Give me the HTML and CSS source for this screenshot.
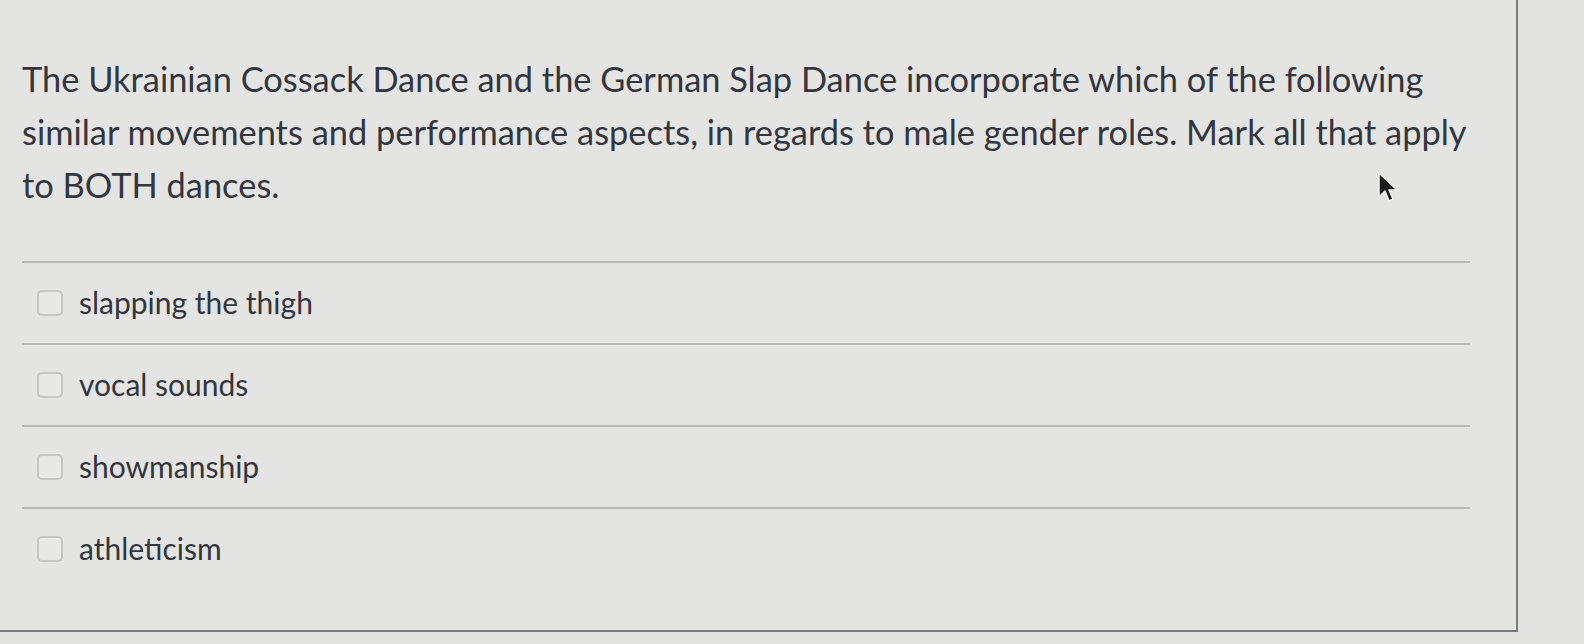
FILE: index.html
```html
<!DOCTYPE html>
<html>
<head>
<meta charset="utf-8">
<link rel="stylesheet" href="styles.css">
</head>
<body>
<div class="page">
  <div class="card">
    <p class="question">The Ukrainian Cossack Dance and the German Slap Dance incorporate which of the following similar movements and performance aspects, in regards to male gender roles. Mark all that apply to BOTH dances.</p>
    <ul class="options">
      <li class="option"><span class="box"></span><span class="label">slapping the thigh</span></li>
      <li class="option"><span class="box"></span><span class="label">vocal sounds</span></li>
      <li class="option"><span class="box"></span><span class="label">showmanship</span></li>
      <li class="option"><span class="box"></span><span class="label">athleticism</span></li>
    </ul>
    <svg class="cursor" width="22" height="34" viewBox="0 0 22 34">
      <path d="M2 2 L2 26 L8 20 L12 30 L16 28 L12 19 L20 19 Z" fill="#1c1c1c" stroke="#f2f2f2" stroke-width="1.5" stroke-linejoin="round"/>
    </svg>
  </div>
</div>
</body>
</html>
```
FILE: styles.css
```css
html, body {
  margin: 0;
  padding: 0;
}
body {
  background: #e2e3e1;
  font-family: Lato, "Open Sans", sans-serif;
  color: #33363f;
}
.page {
  width: 1584px;
  height: 644px;
  overflow: hidden;
}
.card {
  position: relative;
  width: 1516px;
  height: 630px;
  border-right: 2px solid #7a7b7d;
  border-bottom: 2px solid #7a7b7d;
  background: #e4e5e3;
  box-sizing: content-box;
}
.question {
  margin: 0;
  padding: 52px 0 0 22px;
  width: 1462px;
  font-size: 34.4px;
  line-height: 53px;
}
.options {
  list-style: none;
  margin: 50px 0 0 0;
  padding: 0 0 0 22px;
  width: 1448px;
}
.option {
  display: flex;
  align-items: center;
  height: 80px;
  border-top: 2px solid #b9bab9;
}
.box {
  width: 26px;
  height: 26px;
  margin-left: 15px;
  border: 2px solid #c4c5c4;
  border-radius: 5px;
  background: #e8e9e7;
  box-sizing: border-box;
}
.label {
  margin-left: 16px;
  font-size: 30px;
  padding-bottom: 3px;
}
.cursor {
  position: absolute;
  left: 1377px;
  top: 171px;
}
```
